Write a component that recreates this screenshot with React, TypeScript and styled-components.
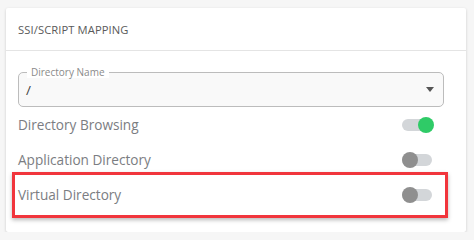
import styled, { createGlobalStyle } from "styled-components";

const GlobalStyle = createGlobalStyle`
  html, body {
    margin: 0;
    padding: 0;
    background: #f6f6f6;
    font-family: "Open Sans", "Liberation Sans", sans-serif;
  }
`;

const Card = styled.div`
  width: 460px;
  margin: 8px 0 0 6px;
  background: #fff;
  box-shadow: 0 1px 3px rgba(0, 0, 0, 0.18);
  border-radius: 2px;
`;

const Header = styled.div`
  height: 42px;
  display: flex;
  align-items: center;
  padding-left: 12px;
  border-bottom: 1px solid #e4e4e4;
  font-size: 11.2px;
  color: #5a5a5a;
  letter-spacing: 0.1px;
`;

const Body = styled.div`
  padding: 21px 22px 14px 12px;
  display: flex;
  flex-direction: column;
`;

const SelectBox = styled.div`
  position: relative;
  height: 35px;
  border: 1px solid #bcbcbc;
  border-radius: 5px;
  background: #f9f9f9;
  display: flex;
  align-items: center;
  padding: 0 7px;
  box-sizing: border-box;
  font-size: 13.5px;
  color: #444;
`;

const Legend = styled.span`
  position: absolute;
  top: -7px;
  left: 8px;
  padding: 0 4px;
  background: #fff;
  font-size: 10px;
  line-height: 12px;
  color: #8a8a8a;
`;

const Caret = styled.span`
  margin-left: auto;
  width: 0;
  height: 0;
  border-left: 4.5px solid transparent;
  border-right: 4.5px solid transparent;
  border-top: 5px solid #555;
  margin-right: 2px;
`;

const Row = styled.div<{ $highlight?: boolean }>`
  height: 35px;
  display: flex;
  align-items: center;
  justify-content: space-between;
  padding-right: 12px;
  font-size: 13.6px;
  color: #7b7d82;
  ${(p) =>
    p.$highlight &&
    `
    height: 46px;
    box-sizing: border-box;
    margin: -5px -4px 0 -6px;
    padding: 0 13px 1px 3px;
    border: 3px solid #f1353c;
    box-shadow: 0 2px 4px rgba(0,0,0,0.28);
  `}
`;

const Track = styled.div`
  position: relative;
  width: 30px;
  height: 12px;
  border-radius: 6px;
  background: #d3d6d9;
`;

const Knob = styled.div<{ $on?: boolean }>`
  position: absolute;
  top: -2px;
  left: ${(p) => (p.$on ? "16px" : "0px")};
  width: 16px;
  height: 16px;
  border-radius: 50%;
  background: ${(p) => (p.$on ? "#2fcb67" : "#8f8f8f")};
`;

const Toggle = ({ on }: { on?: boolean }) => (
  <Track>
    <Knob $on={on} />
  </Track>
);

export default function App() {
  return (
    <>
      <GlobalStyle />
      <Card>
        <Header>SSI/SCRIPT MAPPING</Header>
        <Body>
          <SelectBox>
            <Legend>Directory Name</Legend>
            /
            <Caret />
          </SelectBox>
          <Row>
            <span>Directory Browsing</span>
            <Toggle on />
          </Row>
          <Row>
            <span>Application Directory</span>
            <Toggle />
          </Row>
          <Row $highlight>
            <span>Virtual Directory</span>
            <Toggle />
          </Row>
        </Body>
      </Card>
    </>
  );
}
